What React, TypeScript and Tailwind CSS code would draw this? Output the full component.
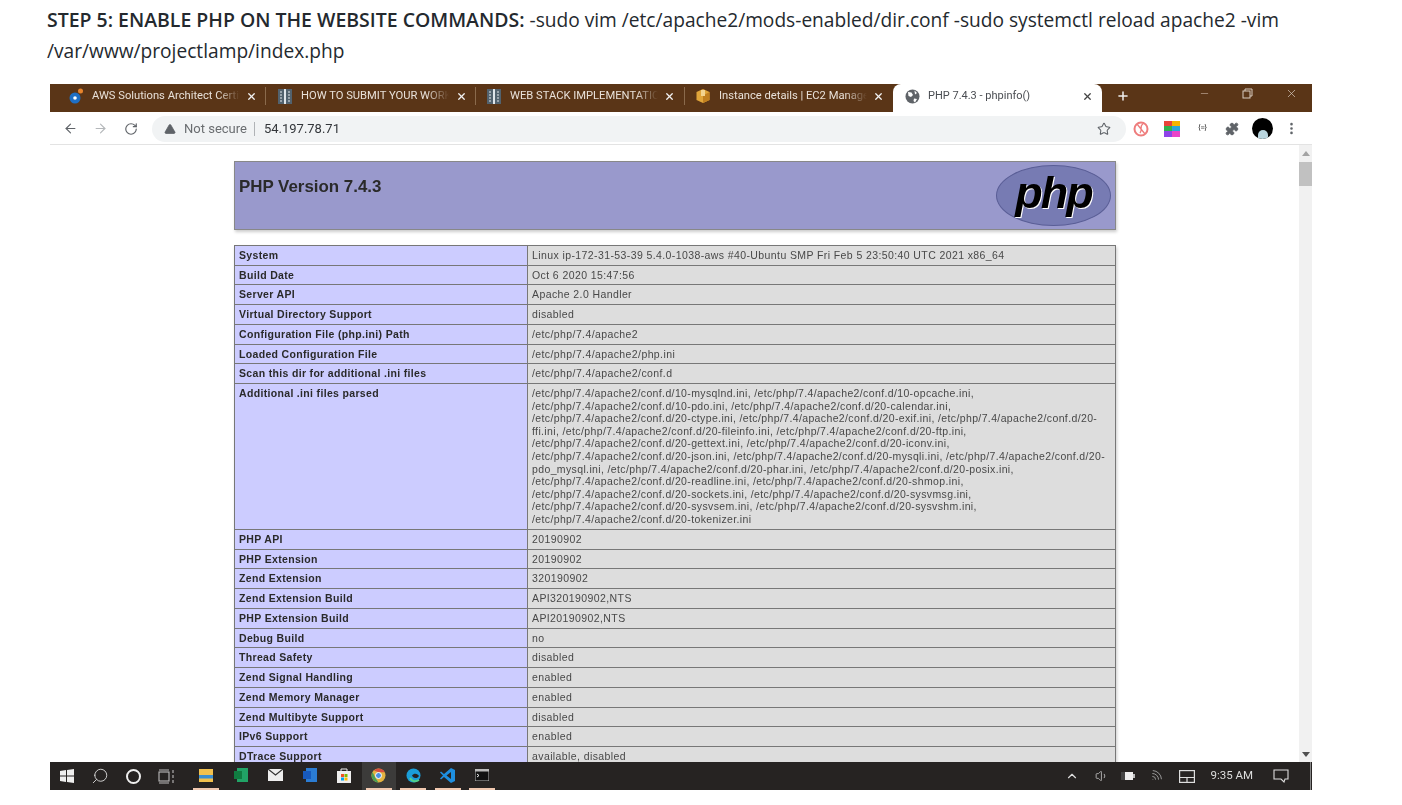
import { ArrowLeft, ArrowRight, ChevronUp, EllipsisVertical, Minus, Plus, Puzzle, RotateCw, Search, Star, TriangleAlert, Volume1, Wifi, X } from "lucide-react";
import type { ReactNode } from "react";

const rowsTop: [string, string][] = [
  ["System", "Linux ip-172-31-53-39 5.4.0-1038-aws #40-Ubuntu SMP Fri Feb 5 23:50:40 UTC 2021 x86_64"],
  ["Build Date", "Oct 6 2020 15:47:56"],
  ["Server API", "Apache 2.0 Handler"],
  ["Virtual Directory Support", "disabled"],
  ["Configuration File (php.ini) Path", "/etc/php/7.4/apache2"],
  ["Loaded Configuration File", "/etc/php/7.4/apache2/php.ini"],
  ["Scan this dir for additional .ini files", "/etc/php/7.4/apache2/conf.d"],
];

const iniLines = [
  "/etc/php/7.4/apache2/conf.d/10-mysqlnd.ini, /etc/php/7.4/apache2/conf.d/10-opcache.ini,",
  "/etc/php/7.4/apache2/conf.d/10-pdo.ini, /etc/php/7.4/apache2/conf.d/20-calendar.ini,",
  "/etc/php/7.4/apache2/conf.d/20-ctype.ini, /etc/php/7.4/apache2/conf.d/20-exif.ini, /etc/php/7.4/apache2/conf.d/20-",
  "ffi.ini, /etc/php/7.4/apache2/conf.d/20-fileinfo.ini, /etc/php/7.4/apache2/conf.d/20-ftp.ini,",
  "/etc/php/7.4/apache2/conf.d/20-gettext.ini, /etc/php/7.4/apache2/conf.d/20-iconv.ini,",
  "/etc/php/7.4/apache2/conf.d/20-json.ini, /etc/php/7.4/apache2/conf.d/20-mysqli.ini, /etc/php/7.4/apache2/conf.d/20-",
  "pdo_mysql.ini, /etc/php/7.4/apache2/conf.d/20-phar.ini, /etc/php/7.4/apache2/conf.d/20-posix.ini,",
  "/etc/php/7.4/apache2/conf.d/20-readline.ini, /etc/php/7.4/apache2/conf.d/20-shmop.ini,",
  "/etc/php/7.4/apache2/conf.d/20-sockets.ini, /etc/php/7.4/apache2/conf.d/20-sysvmsg.ini,",
  "/etc/php/7.4/apache2/conf.d/20-sysvsem.ini, /etc/php/7.4/apache2/conf.d/20-sysvshm.ini,",
  "/etc/php/7.4/apache2/conf.d/20-tokenizer.ini",
];

const rowsBottom: [string, string][] = [
  ["PHP API", "20190902"],
  ["PHP Extension", "20190902"],
  ["Zend Extension", "320190902"],
  ["Zend Extension Build", "API320190902,NTS"],
  ["PHP Extension Build", "API20190902,NTS"],
  ["Debug Build", "no"],
  ["Thread Safety", "disabled"],
  ["Zend Signal Handling", "enabled"],
  ["Zend Memory Manager", "enabled"],
  ["Zend Multibyte Support", "disabled"],
  ["IPv6 Support", "enabled"],
  ["DTrace Support", "available, disabled"],
];

function InfoRow({ name, value }: { name: string; value: string }) {
  return (
    <div className="flex h-[19.72px] border-b border-[#777] text-[10.5px] leading-[18.5px] text-[#2a2a2a]">
      <div className="w-[293px] shrink-0 border-r border-[#777] bg-[#ccccff] pl-[4px] font-bold tracking-[0.33px]">{name}</div>
      <div className="flex-1 bg-[#dddddd] pl-[4px] tracking-[0.4px] text-[#484848]">{value}</div>
    </div>
  );
}

function Tab({ width, left, icon, title, sep = true, closeGap = 7 }: { width: number; left: number; icon: ReactNode; title: string; sep?: boolean; closeGap?: number }) {
  return (
    <div style={{ width, paddingLeft: left }} className="flex h-[24px] shrink-0 items-center">
      <div className="flex h-[15px] w-[16px] shrink-0 items-center justify-center">{icon}</div>
      <div className="ml-[8px] w-[148px] shrink-0 overflow-hidden whitespace-nowrap text-[11.2px] text-[#e8e0d8] [mask-image:linear-gradient(to_right,black_85%,transparent)]">{title}</div>
      <X style={{ marginLeft: closeGap }} size={11} strokeWidth={2.8} className="shrink-0 text-[#f2f2f2]" />
      {sep && <div className="ml-auto h-[18px] w-px bg-[#8a6a4c]" />}
    </div>
  );
}

function BookIcon() {
  return (
    <svg width="14" height="15" viewBox="0 0 14 15">
      <rect x="0" y="0" width="14" height="15" fill="#52626e" />
      <rect x="6" y="0" width="2" height="15" fill="#dfe5ea" />
      <path d="M2 3h2M2 6h2M2 9h2M2 12h2M10 3h2M10 6h2M10 9h2M10 12h2" stroke="#dfe5ea" strokeWidth="1.2" />
    </svg>
  );
}

function TaskIcon({ active, open, children }: { active?: boolean; open?: boolean; children: ReactNode }) {
  return (
    <div className={`flex h-[28px] w-[34.5px] shrink-0 flex-col items-center ${active ? "bg-[#3c3b3a]" : ""}`}>
      <div className="flex flex-1 items-center justify-center">{children}</div>
      <div className={`h-[2px] w-[26px] ${open ? "bg-[#f0c8b0]" : ""}`} />
    </div>
  );
}

export default function App() {
  return (
    <div className="h-[805px] w-[1402px] overflow-hidden bg-white font-['Open_Sans',sans-serif]">
      <p className="pl-[47px] pr-[90px] pt-[4px] text-[19.15px] leading-[31px] text-[#24292e]">
        <span className="text-[19.47px] font-semibold">STEP 5: ENABLE PHP ON THE WEBSITE COMMANDS:</span> -sudo vim /etc/apache2/mods-enabled/dir.conf -sudo systemctl reload apache2 -vim /var/www/projectlamp/index.php
      </p>

      <div className="ml-[50px] mt-[17px] w-[1262px] blur-[0.3px]">
        {/* tab strip */}
        <div className="flex h-[28px] bg-[#5a3517] font-['Roboto',sans-serif]">
          <Tab width={216} left={18} closeGap={6} title="AWS Solutions Architect Certification" icon={
            <svg width="16" height="16" viewBox="0 0 16 16"><circle cx="7" cy="10" r="5.5" fill="#1f6fc4" /><circle cx="7" cy="10" r="1.8" fill="#fff" /><circle cx="12.5" cy="3" r="2.5" fill="#e8842c" /></svg>
          } />
          <Tab width={210} left={11} title="HOW TO SUBMIT YOUR WORK" icon={<BookIcon />} closeGap={7} />
          <Tab width={209} left={10} title="WEB STACK IMPLEMENTATION" icon={<BookIcon />} closeGap={6} />
          <Tab width={208} left={10} sep={false} closeGap={6} title="Instance details | EC2 Management" icon={
            <svg width="16" height="16" viewBox="0 0 16 16"><path d="M8 1l6.5 3v8L8 15l-6.5-3V4z" fill="#e0a53a" /><path d="M8 7.5V15l6.5-3V4z" fill="#c07f1f" /><path d="M6 2v6l4 0V2" fill="#f3d48f" /></svg>
          } />
          <div className="flex h-[28px] w-[209px] shrink-0 items-center rounded-t-[8px] bg-white pb-[4px] pl-[12px]">
            <svg width="15" height="15" viewBox="0 0 15 15">
              <circle cx="7.5" cy="7.5" r="7" fill="#5f6368" />
              <path d="M3 3l3.5.5L8 6 6 8 3.5 7zM9 9.5l3 .5-2 3.5-1.5-1.5zM9.5 1.5L12 4l-2 1.5z" fill="#fff" />
            </svg>
            <span className="ml-[8px] w-[154px] shrink-0 text-[11px] text-[#4a4d52]">PHP 7.4.3 - phpinfo()</span>
            <X size={11} strokeWidth={2.8} className="text-[#444]" />
          </div>
          <div className="flex h-[24px] flex-1 items-center text-[#eee]">
            <Plus size={14} strokeWidth={2.6} className="ml-[14px]" />
            <Minus size={11} strokeWidth={1.5} className="-mt-[6px] ml-[69px] text-[#bfa894]" />
            <svg width="11" height="11" viewBox="0 0 11 11" fill="none" stroke="#d8ccc0" className="-mt-[6px] ml-[32px]"><rect x="1" y="3" width="7" height="7" /><path d="M3 3V1h7v7H8" /></svg>
            <X size={13} strokeWidth={1.3} className="-mt-[6px] ml-[32px] text-[#d8ccc0]" />
          </div>
        </div>

        {/* toolbar */}
        <div className="flex h-[33px] items-center border-b border-[#e3e3e3] bg-white pt-[1px] font-['Roboto',sans-serif]">
          <ArrowLeft size={15} strokeWidth={1.8} className="ml-[13px] text-[#5f6368]" />
          <ArrowRight size={15} strokeWidth={1.8} className="ml-[15px] text-[#b4b7ba]" />
          <RotateCw size={14} strokeWidth={2} className="ml-[16px] text-[#5f6368]" />
          <div className="ml-[14px] flex h-[26px] w-[974px] items-center rounded-full bg-[#f1f3f4] pl-[12px]">
            <TriangleAlert size={12} fill="#5f6368" strokeWidth={1.5} className="text-[#5f6368]" />
            <span className="ml-[8px] text-[13px] text-[#6a6d70]">Not secure</span>
            <span className="ml-[7px] h-[14px] w-px bg-[#b0b3b6]" />
            <span className="ml-[9px] text-[13px] text-[#33363a]">54.197.78.71</span>
            <Star size={14} strokeWidth={1.8} className="ml-auto mr-[15px] text-[#5f6368]" />
          </div>
          <svg width="16" height="18" viewBox="0 0 16 18" fill="none" className="ml-[7px]"><circle cx="8" cy="9" r="6.5" stroke="#ee7d7d" strokeWidth="2" /><path d="M4 4l8 10M10 4C6 6 10 9 7 13" stroke="#ee7d7d" strokeWidth="1.3" /></svg>
          <div className="ml-[15px] grid h-[16px] w-[16px] grid-cols-2">
            <div className="bg-[#e9443a]" /><div className="bg-[#f4b400]" />
            <div className="bg-[#2fb24c]" /><div className="bg-[#2aa6d8]" />
            <div className="bg-[#8e44e8]" /><div className="bg-[#e945c8]" />
          </div>
          <span className="ml-[12px] w-[21px] text-center text-[7px] font-bold text-[#555]">{"{≡}"}</span>
          <Puzzle size={14} fill="#5f6368" strokeWidth={1.5} className="ml-[12px] text-[#5f6368]" />
          <div className="ml-[13px] flex h-[21px] w-[21px] items-end justify-center overflow-hidden rounded-full bg-black">
            <div className="h-[9px] w-[10px] rounded-t-full bg-[#b9d5de]" />
          </div>
          <EllipsisVertical size={15} strokeWidth={2.2} className="ml-[11px] text-[#5f6368]" />
        </div>

        {/* page */}
        <div className="flex h-[617px] overflow-hidden bg-white font-['Liberation_Sans',sans-serif]">
          <div className="ml-[184px] w-[882px] shrink-0 pt-[16px]">
            <div className="flex h-[69px] items-start justify-between border border-[#888] bg-[#9999cc] pl-[4px] pr-[4px] shadow-[1px_2px_3px_#ccc]">
              <h1 className="mt-[15px] text-[16.9px] font-bold leading-[20px] text-[#2a2a2a]">PHP Version 7.4.3</h1>
              <div className="mt-[3px] flex h-[61px] w-[115px] items-center justify-center rounded-[50%] border border-[#5a5e96] bg-[#777bb3] pb-[6px]">
                <span className="text-[45px] font-bold italic leading-[50px] tracking-[-2px] text-black [text-shadow:1px_1px_0_#fff]">php</span>
              </div>
            </div>
            <div className="mt-[15px] border-l border-r border-t border-[#777] shadow-[1px_2px_3px_#ccc]">
              {rowsTop.map(([name, value]) => <InfoRow key={name} name={name} value={value} />)}
              <div className="flex h-[146px] border-b border-[#777] text-[10.5px] text-[#2a2a2a]">
                <div className="w-[293px] shrink-0 border-r border-[#777] bg-[#ccccff] pl-[4px] font-bold leading-[18.5px] tracking-[0.33px]">Additional .ini files parsed</div>
                <div className="flex-1 bg-[#dddddd] pl-[4px] pt-[3px] leading-[12.58px] tracking-[0.37px] text-[#484848]">
                  {iniLines.map(line => <div key={line} className="whitespace-nowrap">{line}</div>)}
                </div>
              </div>
              {rowsBottom.map(([name, value]) => <InfoRow key={name} name={name} value={value} />)}
            </div>
          </div>
          {/* scrollbar */}
          <div className="ml-auto flex w-[13px] flex-col items-center bg-[#f1f1f1]">
            <div className="mt-[6px] h-0 w-0 border-x-[4px] border-b-[5px] border-x-transparent border-b-[#a3a3a3]" />
            <div className="mt-[6px] h-[24px] w-full bg-[#c1c1c1]" />
            <div className="mb-[5px] mt-auto h-0 w-0 border-x-[4px] border-t-[5px] border-x-transparent border-t-[#505050]" />
          </div>
        </div>

        {/* taskbar */}
        <div className="flex h-[28px] items-center bg-[#262322] font-['Roboto',sans-serif] text-[#ddd]">
          <svg width="14" height="14" viewBox="0 0 14 14" fill="#eee" className="ml-[10px]"><path d="M0 2l6-1v5.5H0zM7 1l7-1v6.5H7zM0 7.5h6V13l-6-1zM7 7.5h7V14l-7-1z" /></svg>
          <Search size={18} strokeWidth={1.2} className="ml-[17px] -scale-x-100 text-[#ddd]" />
          <div className="ml-[17px] h-[15px] w-[15px] rounded-full border-2 border-[#eee]" />
          <svg width="18" height="15" viewBox="0 0 18 15" fill="none" stroke="#bbb" strokeWidth="1.1" className="ml-[17px]"><rect x="1" y="3" width="10" height="9" /><path d="M1 1h10M1 14h10M15 1v3M15 6v3M15 11v3" /></svg>
          <div className="ml-[13px] flex">
            <TaskIcon open><svg width="14" height="13" viewBox="0 0 14 13"><rect width="14" height="13" fill="#f2c14e" /><rect y="6" width="14" height="3.5" fill="#3b8ed0" /></svg></TaskIcon>
            <TaskIcon><svg width="14" height="14" viewBox="0 0 14 14"><rect x="3" width="11" height="14" fill="#21a366" /><rect y="3" width="8" height="8" fill="#107c41" /></svg></TaskIcon>
            <TaskIcon><svg width="15" height="12" viewBox="0 0 15 12"><rect width="15" height="12" fill="#eee" /><path d="M0 0l7.5 6L15 0" fill="none" stroke="#333" strokeWidth="1.2" /></svg></TaskIcon>
            <TaskIcon><svg width="14" height="14" viewBox="0 0 14 14"><rect x="3" width="11" height="14" fill="#2b7cd3" /><rect y="3" width="8" height="8" fill="#185abd" /></svg></TaskIcon>
            <TaskIcon><svg width="14" height="15" viewBox="0 0 14 15"><rect y="3" width="14" height="12" fill="#eee" /><path d="M4 4V1h6v3" fill="none" stroke="#eee" /><rect x="4" y="6" width="3" height="3" fill="#f25022" /><rect x="7.5" y="6" width="3" height="3" fill="#7fba00" /><rect x="4" y="9.5" width="3" height="3" fill="#00a4ef" /><rect x="7.5" y="9.5" width="3" height="3" fill="#ffb900" /></svg></TaskIcon>
            <TaskIcon active open><svg width="15" height="15" viewBox="0 0 15 15"><circle cx="7.5" cy="7.5" r="7" fill="#e3b341" /><path d="M7.5.5a7 7 0 0 1 6.2 3.7H7.5L3 2.5A7 7 0 0 1 7.5.5z" fill="#d9503f" /><path d="M1.5 4l3 6 3 4.5A7 7 0 0 1 1.5 4z" fill="#4a9e55" /><circle cx="7.5" cy="7.5" r="3" fill="#4a8fe0" stroke="#fff" /></svg></TaskIcon>
            <TaskIcon open><svg width="15" height="15" viewBox="0 0 15 15"><circle cx="7.5" cy="7.5" r="7" fill="#1b9ed9" /><path d="M6 7.5c2-3 6-2 7 .5-1 2-4 3-6 1" fill="#262322" /><path d="M4 10c2 4 6 4 9 2" stroke="#53d18a" strokeWidth="2" fill="none" /></svg></TaskIcon>
            <TaskIcon open><svg width="15" height="15" viewBox="0 0 15 15"><path d="M11 0l4 2v11l-4 2-7-6-3 2.5L0 10.5 3 7.5 0 4.5 1 3.500l3 2.500z" fill="#1e8fe0" /><path d="M11 4L6.500 7.500 11 11z" fill="#262322" /></svg></TaskIcon>
            <TaskIcon open><svg width="14" height="12" viewBox="0 0 14 12"><rect width="14" height="12" fill="#111" stroke="#bbb" /><rect width="14" height="2.500" fill="#bbb" /><path d="M2 5l2 1.500L2 8" stroke="#eee" fill="none" /></svg></TaskIcon>
          </div>
          <ChevronUp size={14} strokeWidth={2} className="ml-[565px]" />
          <Volume1 size={14} strokeWidth={1.5} className="ml-[16px] text-[#bbb]" />
          <svg width="15" height="10" viewBox="0 0 15 10" className="ml-[11px]"><rect x="1" y="1" width="12" height="8" fill="#eee" /><rect x="13" y="3" width="2" height="4" fill="#bbb" /><rect x="1" y="1" width="4" height="8" fill="#444" /></svg>
          <Wifi size={14} strokeWidth={1.6} className="ml-[14px] rotate-45 text-[#999]" />
          <svg width="16" height="13" viewBox="0 0 16 13" fill="none" stroke="#ddd" strokeWidth="1.2" className="ml-[16px]"><rect x="0.600" y="0.600" width="14.800" height="11.800" /><path d="M1 7.500h14M8 7.500V12" /></svg>
          <span className="ml-[16px] whitespace-nowrap text-[11.5px] text-[#ddd]">9:35 AM</span>
          <svg width="16" height="14" viewBox="0 0 16 14" fill="none" stroke="#ddd" strokeWidth="1.1" className="ml-[20px]"><path d="M1 1h14v9h-3l-1 3-3-3H1z" /></svg>
          <div className="ml-auto mr-[1px] h-full w-px bg-[#888]" />
        </div>
      </div>
    </div>
  );
}
